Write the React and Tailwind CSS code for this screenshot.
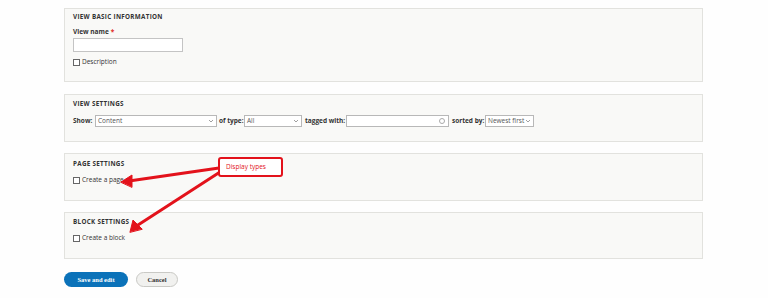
import React from 'react'

const font = { fontFamily: '"Open Sans", "DejaVu Sans", sans-serif' }

function Check({ label }) {
  return (
    <div className="flex items-center h-[10px] gap-[2px] text-[6.5px] text-[#333] whitespace-nowrap">
      <span className="w-[7px] h-[7px] border border-[#666] bg-white" />
      <span>{label}</span>
    </div>
  )
}

function Select({ value, w }) {
  return (
    <div className={`${w} shrink-0 h-[12px] border border-[#b8b8b8] bg-white flex items-center justify-between px-[2px] text-[6.5px] text-[#555] whitespace-nowrap`}>
      <span>{value}</span>
      <svg width="6" height="4" viewBox="0 0 6 4"><path d="M1 1l2 2 2-2" fill="none" stroke="#888" strokeWidth="0.8" /></svg>
    </div>
  )
}

function Heading({ children }) {
  return <div className="h-[10px] flex items-center text-[6.3px] font-bold tracking-[0.3px] text-[#333] uppercase whitespace-nowrap">{children}</div>
}

export default function App() {
  return (
    <div className="relative w-[768px] h-[298px] bg-[#fefefe] overflow-hidden" style={font}>
      <div className="pl-[64px] pt-[8px] w-[703px]">
        {/* basic info */}
        <div className="h-[74px] border border-[#e2e2de] bg-[#f9f9f7] px-[8px] pt-[3px]">
          <Heading>View basic information</Heading>
          <div className="mt-[5px] h-[10px] flex items-center text-[6.5px] font-bold text-[#333]">
            View name <span className="text-[#e1261c] ml-[2px]">*</span>
          </div>
          <div className="mt-[1px] w-[110px] h-[14px] border border-[#c4c4c4] bg-white" />
          <div className="mt-[5px]"><Check label="Description" /></div>
        </div>

        {/* view settings */}
        <div className="mt-[12px] h-[48px] border border-[#e2e2de] bg-[#f9f9f7] px-[8px] pt-[4px]">
          <Heading>View settings</Heading>
          <div className="mt-[6px] flex items-center text-[6.5px] text-[#333] whitespace-nowrap">
            <span className="font-bold w-[22px] shrink-0">Show:</span>
            <Select value="Content" w="w-[122px]" />
            <span className="font-bold ml-[2px] w-[25px] shrink-0">of type:</span>
            <Select value="All" w="w-[58px]" />
            <span className="font-bold ml-[3px] w-[41px] shrink-0">tagged with:</span>
            <div className="w-[103px] shrink-0 h-[12px] border border-[#b8b8b8] bg-white flex items-center justify-end pr-[3px]">
              <span className="w-[6px] h-[6px] rounded-full border border-[#aaa]" />
            </div>
            <span className="font-bold ml-[3px] w-[33px] shrink-0">sorted by:</span>
            <Select value="Newest first" w="w-[49px]" />
          </div>
        </div>

        {/* page settings */}
        <div className="mt-[11px] h-[48px] border border-[#e2e2de] bg-[#f9f9f7] px-[8px] pt-[5px]">
          <Heading>Page settings</Heading>
          <div className="mt-[6px]"><Check label="Create a page" /></div>
        </div>

        {/* block settings */}
        <div className="mt-[11px] h-[47px] border border-[#e2e2de] bg-[#f9f9f7] px-[8px] pt-[4px]">
          <Heading>Block settings</Heading>
          <div className="mt-[6px]"><Check label="Create a block" /></div>
        </div>

        <div className="mt-[13px] flex gap-[8px]">
          <button className="w-[64px] h-[15px] rounded-full bg-[#0b72b9] text-white text-[6.5px] font-bold" style={{ fontFamily: '"Liberation Serif", serif' }}>Save and edit</button>
          <button className="w-[42px] h-[15px] rounded-full bg-[#f1f1ef] border border-[#c9c9c5] text-[#333] text-[6.5px] font-bold" style={{ fontFamily: '"Liberation Serif", serif' }}>Cancel</button>
        </div>
      </div>

      {/* annotation arrows */}
      <svg className="absolute left-0 top-0" width="768" height="298" viewBox="0 0 768 298">
        <g fill="#e3121b" stroke="#e3121b" strokeLinecap="round" strokeLinejoin="round">
          <line x1="219" y1="168" x2="129" y2="181" strokeWidth="3" />
          <path d="M121 182 L132 175 L132 187 Z" strokeWidth="1" />
          <line x1="220" y1="172" x2="138" y2="225" strokeWidth="3" />
          <path d="M130 232 L133 220 L142 229 Z" strokeWidth="1" />
        </g>
      </svg>
      <div className="absolute left-[218px] top-[157px] w-[65px] h-[20px] border-2 border-[#e3121b] rounded-[3px] bg-white flex items-center pl-[6px] text-[6.5px] text-[#e3121b]">
        Display types
      </div>
    </div>
  )
}
